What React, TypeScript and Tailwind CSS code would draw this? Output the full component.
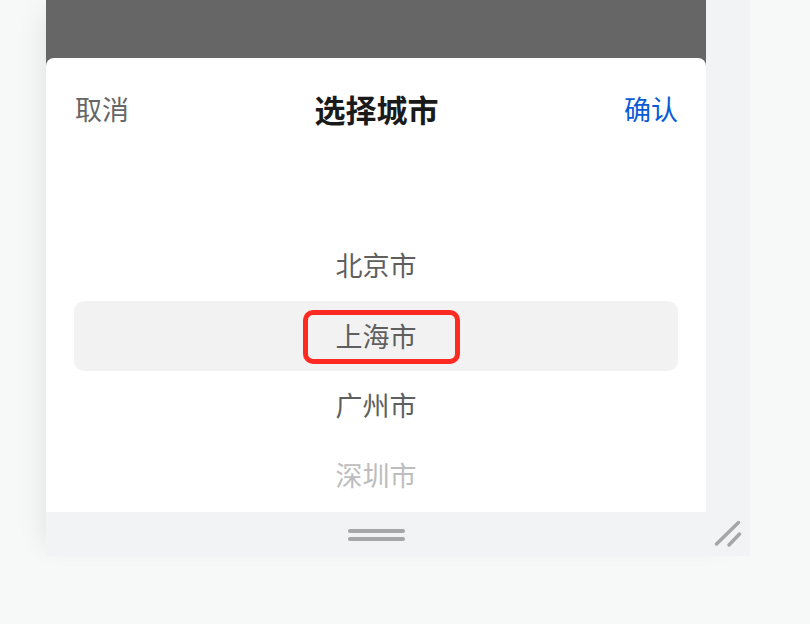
export default function App() {
  const cities = [
    { name: '', tone: '' },
    { name: '北京市', tone: 'text-[#5f5f5f]' },
    { name: '上海市', tone: 'text-[#5f5f5f]', selected: true },
    { name: '广州市', tone: 'text-[#5f5f5f]' },
    { name: '深圳市', tone: 'text-[#bdbdbd]' },
  ];

  return (
    <div className="w-[810px] h-[624px] bg-[#f7f8f8] font-['Noto_Sans_CJK_SC','Noto_Sans',sans-serif]">
      <div className="ml-[46px] w-[704px] h-[556px] flex flex-col shadow-[-14px_0_24px_-10px_rgba(0,0,0,0.08)]">
        {/* Device area */}
        <div className="flex flex-1 min-h-0">
          <div className="w-[660px] bg-[#666666] flex flex-col">
            <div className="h-[58px] shrink-0" />
            <div className="flex-1 min-h-0 bg-white rounded-t-[8px] overflow-hidden flex flex-col">
              {/* Header */}
              <div className="h-[103px] shrink-0 flex items-center justify-between pl-[29px] pr-[28px] pb-[2px]">
                <button className="text-[27px] text-[#666666] leading-none">取消</button>
                <h2 className="text-[31px] font-bold text-[#1a1a1a] leading-none">选择城市</h2>
                <button className="text-[27px] text-[#0a5ad6] leading-none">确认</button>
              </div>
              {/* Picker */}
              <div className="px-[28px] flex flex-col">
                {cities.map((c, i) => (
                  <div
                    key={i}
                    className={
                      c.selected
                        ? 'h-[70px] shrink-0 flex items-center justify-center rounded-[10px] bg-[#f2f2f2]'
                        : 'h-[70px] shrink-0 flex items-center justify-center pb-[4px]'
                    }
                  >
                    {c.selected ? (
                      <span className="ml-[10px] mt-[2px] h-[54px] pl-[28px] pr-[38px] pb-[4px] flex items-center border-[5px] border-[#ff2a22] rounded-[10px]">
                        <span className={`text-[27px] leading-none ${c.tone}`}>{c.name}</span>
                      </span>
                    ) : (
                      <span className={`text-[27px] leading-none ${c.tone}`}>{c.name}</span>
                    )}
                  </div>
                ))}
              </div>
            </div>
          </div>
          <div className="w-[44px] bg-[#f2f3f5]" />
        </div>
        {/* Bottom bar with drag handle and resize grip */}
        <div className="h-[44px] shrink-0 bg-[#f2f3f5] flex">
          <div className="w-[660px] flex flex-col items-center justify-center gap-[4px] pt-[2px]">
            <div className="w-[57px] h-[4px] rounded-full bg-[#a6a6a6]" />
            <div className="w-[57px] h-[4px] rounded-full bg-[#a6a6a6]" />
          </div>
          <div className="w-[44px] h-[44px]">
            <svg width="44" height="44" viewBox="0 0 44 44">
              <line x1="10.5" y1="32" x2="32.5" y2="10.5" stroke="#a6a6a6" strokeWidth="3.5" strokeLinecap="round" />
              <line x1="23" y1="33" x2="33.5" y2="22" stroke="#a6a6a6" strokeWidth="3.5" strokeLinecap="round" />
            </svg>
          </div>
        </div>
      </div>
    </div>
  );
}
